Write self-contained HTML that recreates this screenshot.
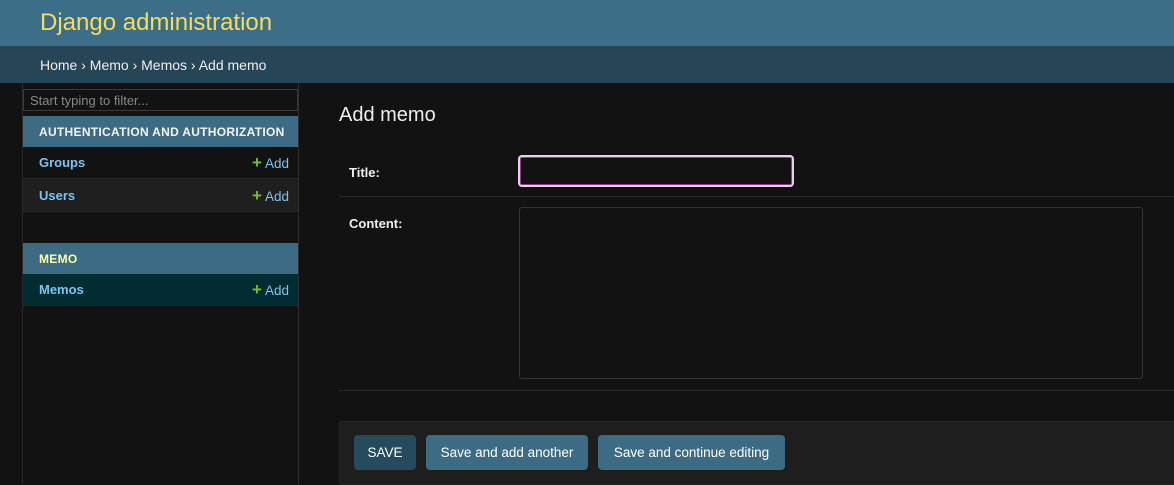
<!DOCTYPE html>
<html><head><meta charset="utf-8"><style>
*{box-sizing:border-box;margin:0;padding:0}
body{width:1174px;height:484px;overflow:hidden;background:#121212;font-family:"Liberation Sans",sans-serif;position:relative;color:#eee}
.a{position:absolute}
#hdr{left:0;top:0;width:1174px;height:46px;background:#3d6e87}
#hdr span{position:absolute;left:40px;top:9px;font-size:24px;color:#f5dd5d}
#bc{left:0;top:46px;width:1174px;height:37px;background:#264556;font-size:14px;color:#f0f0f0;padding:11px 40px}
#side{left:22px;top:83px;width:277px;height:401px;border-left:1px solid #2a2a2a;border-right:1px solid #2e2e2e}
#filter{left:23px;top:89px;width:275px;height:22px;border:1px solid #3a3a3a;background:#121212;font-size:13px;color:#888;padding:3px 6px}
.mh{left:23px;width:275px;height:31px;background:#3d6b83;font-size:12px;font-weight:bold;letter-spacing:.3px;padding:9px 16px;color:#f4f4f4;white-space:nowrap}
.row{left:23px;width:275px;font-size:13px;font-weight:bold;color:#79c4f0;padding-left:16px;border-bottom:1px solid #262626}
.row i{position:absolute;right:9px;font-style:normal;font-weight:normal;color:#79c4f0;font-size:13.5px}
.row i b{color:#70bf2b;font-size:17px;margin-right:3px;font-weight:900}
.lbl{font-size:13px;font-weight:bold;color:#f0f0f0}
.btn{top:435px;height:35px;border-radius:4px;font-size:13.5px;color:#fff;text-align:center;line-height:35px;background:#3d6b83}
</style></head><body>
<div class="a" id="hdr"><span>Django administration</span></div>
<div class="a" id="bc">Home › Memo › Memos › Add memo</div>
<div class="a" id="side"></div>
<div class="a" id="filter">Start typing to filter...</div>
<div class="a mh" style="top:116px">AUTHENTICATION AND AUTHORIZATION</div>
<div class="a row" style="top:147px;height:32px;line-height:32px;background:#121212">Groups<i><b>+</b>Add</i></div>
<div class="a row" style="top:179px;height:33px;line-height:33px;background:#1f1f1f">Users<i><b>+</b>Add</i></div>
<div class="a mh" style="top:243px;color:#ffffa8">MEMO</div>
<div class="a row" style="top:274px;height:32px;line-height:32px;background:#022c32">Memos<i><b>+</b>Add</i></div>
<div class="a" style="left:339px;top:104px;font-size:20px;color:#eee">Add memo</div>
<div class="a lbl" style="left:349px;top:165px">Title:</div>
<div class="a" style="left:518px;top:155px;width:276px;height:32px;border:2px solid #e8d0ec;border-radius:4px;box-shadow:inset 0 0 0 1px #8a3c8e;background:#121212"></div>
<div class="a" style="left:339px;top:196px;width:835px;height:1px;background:#2a2a2a"></div>
<div class="a lbl" style="left:349px;top:216px">Content:</div>
<div class="a" style="left:519px;top:207px;width:624px;height:172px;border:1px solid #353535;border-radius:3px"></div>
<div class="a" style="left:339px;top:390px;width:835px;height:1px;background:#2a2a2a"></div>
<div class="a" style="left:339px;top:421px;width:840px;height:64px;background:#1e1e1e;border:1px solid #252525;border-radius:3px"></div>
<div class="a btn" style="left:354px;width:62px;background:#264b5d">SAVE</div>
<div class="a btn" style="left:426px;width:162px">Save and add another</div>
<div class="a btn" style="left:598px;width:187px">Save and continue editing</div>
</body></html>
